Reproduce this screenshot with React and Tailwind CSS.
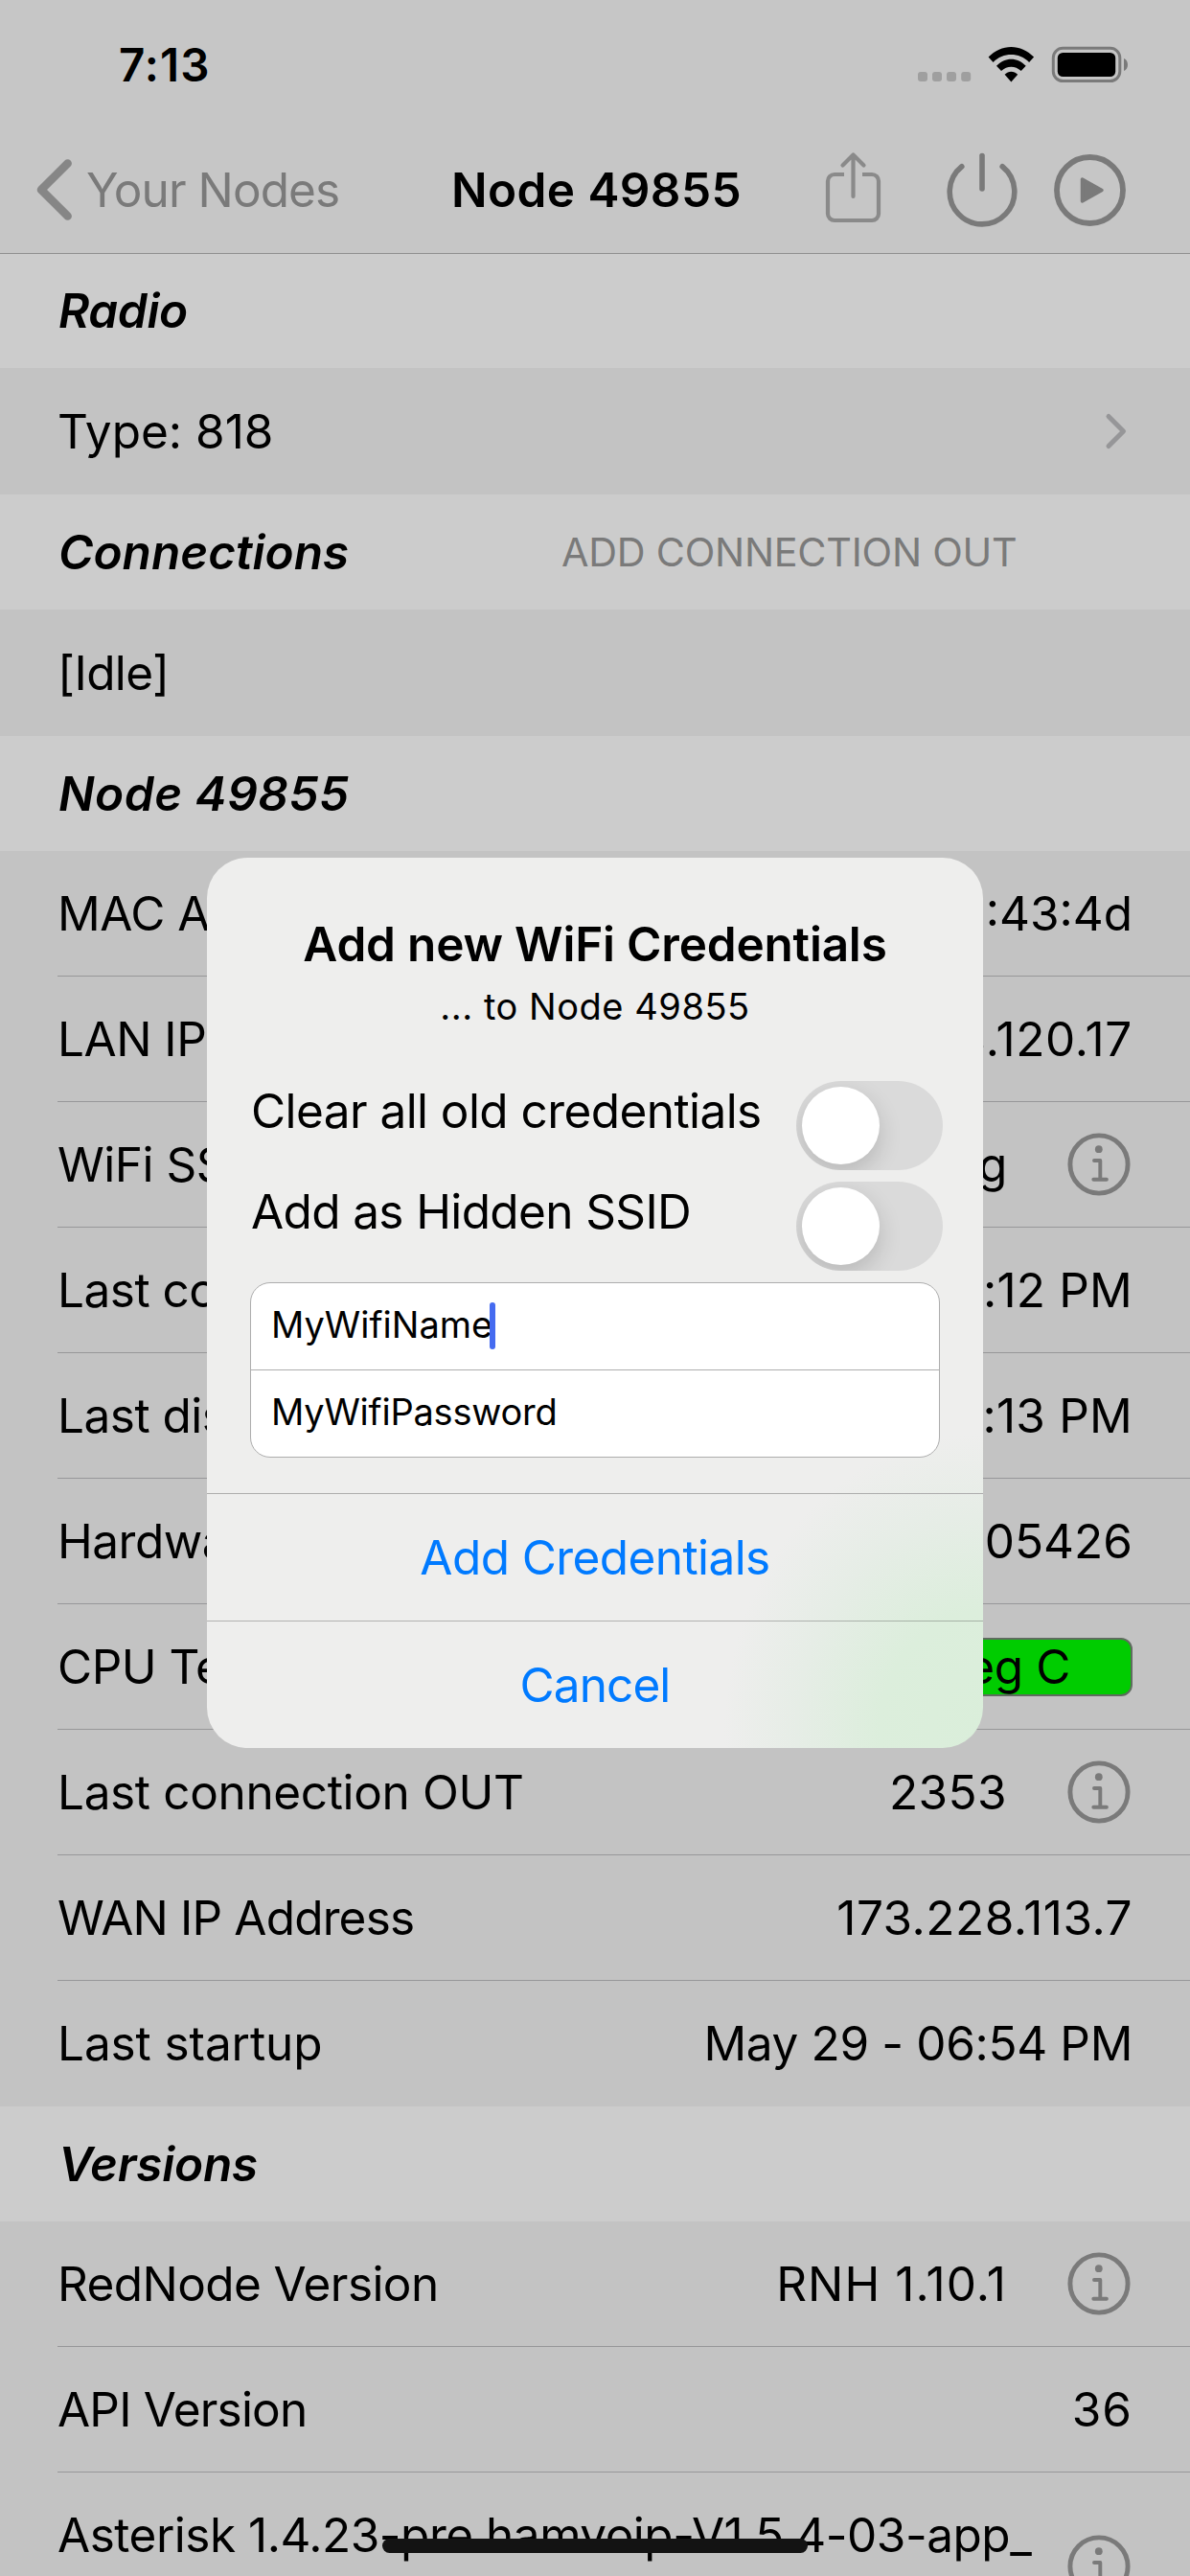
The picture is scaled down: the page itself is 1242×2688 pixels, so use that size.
import React from 'react'

const nodeRows = [
  { label: 'MAC Address', value: 'b8:27:eb:80:43:4d', valueClass: 'tracking-normal' },
  { label: 'LAN IP Address', value: '192.168.120.17', valueClass: 'tracking-[0.7px]' },
  { label: 'WiFi SSID', value: 'HamLoung', info: true, valueClass: 'tracking-[-0.3px]' },
  { label: 'Last connected', value: 'May 29 - 07:12 PM', valueClass: 'tracking-[0.2px]' },
  { label: 'Last disconnect', value: 'May 29 - 07:13 PM', valueClass: 'tracking-[0.2px]' },
  { label: 'Hardware', value: '0000000005426' },
  { label: 'CPU Temperature', badge: '55 Deg C' },
  { label: 'Last connection OUT', value: '2353', info: true, labelClass: 'tracking-[-0.35px]', valueClass: 'tracking-[0.4px]' },
  { label: 'WAN IP Address', value: '173.228.113.7', labelClass: 'tracking-[-0.83px]', valueClass: 'tracking-[0.5px]' },
  { label: 'Last startup', value: 'May 29 - 06:54 PM', labelClass: 'tracking-[-0.1px]', valueClass: 'tracking-[-0.35px]' },
]

const versionRows = [
  { label: 'RedNode Version', value: 'RNH 1.10.1', info: true, labelClass: 'tracking-[-0.6px]', valueClass: 'tracking-[1.06px]' },
  { label: 'API Version', value: '36', labelClass: 'tracking-[-0.79px]', valueClass: 'tracking-[1px]' },
]

const InfoIcon = () => (
  <svg className="h-[66px] w-[66px] shrink-0" viewBox="0 0 66 66" fill="none" stroke="#7a7a7a" strokeLinecap="round" strokeLinejoin="round">
    <circle cx="33" cy="33" r="30.1" strokeWidth="4.9" />
    <circle cx="32.8" cy="17.2" r="3.9" fill="#7a7a7a" stroke="none" />
    <path d="M28 29h6.3v19.8M27.3 48.8h13.6" strokeWidth="3.9" />
  </svg>
)

const StatusBar = () => (
  <div className="flex h-[132px] items-start justify-between pl-[124px] pr-[64px] pt-[38px]">
    <span className="text-[47.5px] leading-[60px] font-semibold tracking-[1.07px]">7:13</span>
    <svg className="mt-[7px] h-[48px] w-[222px]" viewBox="0 0 222 48">
      <g fill="#9f9f9f">
        <rect x="2" y="30" width="10" height="10" rx="3" />
        <rect x="17" y="30" width="10" height="10" rx="3" />
        <rect x="32" y="30" width="10" height="10" rx="3" />
        <rect x="47.2" y="30" width="10" height="10" rx="3" />
      </g>
      <path d="M75.6 14.6c13.4-14.2 34.1-14.2 47.5 0l-5 5.3c-10.4-10.6-27.1-10.6-37.5 0z" />
      <path d="M84 23.8c8.8-9.4 22-9.4 30.7 0l-5 5.2c-6-5.8-14.6-5.8-20.7 0z" />
      <path d="M92.6 32.8c4-4 9.6-4 13.6 0l-6.8 7.6z" />
      <rect x="143.3" y="5.3" width="69.5" height="34.2" rx="10" fill="none" stroke="#7a7a7a" strokeWidth="3" />
      <rect x="147.8" y="10" width="60.4" height="25" rx="5.5" />
      <path d="M217 16c5.3 2 5.3 11 0 13z" fill="#7a7a7a" />
    </svg>
  </div>
)

const NavBar = () => (
  <div className="flex h-[132px] items-center pl-[36px] pr-[66px]">
    <svg className="h-[68px] w-[42px]" viewBox="0 0 42 68" fill="none" stroke="#868686" strokeWidth="8.6" strokeLinecap="round" strokeLinejoin="round">
      <path d="M34.6 6.5L7 34L34.6 61.5" />
    </svg>
    <span className="ml-[12px] w-[381px] text-[49.5px] tracking-[-0.94px] text-[#7a7a7a]">Your Nodes</span>
    <h1 className="flex-1 text-[49.5px] font-semibold tracking-[0.41px]">Node 49855</h1>
    <svg className="h-[82px] w-[64px]" viewBox="0 0 64 82" fill="none" stroke="#8a8a8a" strokeWidth="4.2" strokeLinecap="round" strokeLinejoin="round">
      <path d="M23 25H13a7 7 0 0 0-7 7V66a7 7 0 0 0 7 7h39a7 7 0 0 0 7-7V32a7 7 0 0 0-7-7h-10" strokeLinecap="butt" />
      <path d="M32.5 48V5M21.5 15.5L32.5 4.5L43.5 15.5" />
    </svg>
    <svg className="ml-[64px] h-[82px] w-[78px]" viewBox="0 0 78 82" fill="none" stroke="#7a7a7a" strokeWidth="5.6" strokeLinecap="round">
      <path d="M17.8 16.8a33.8 33.8 0 1 0 42.4 0" />
      <path d="M39 5.5V40" />
    </svg>
    <svg className="ml-[34px] h-[82px] w-[78px]" viewBox="0 0 78 82">
      <circle cx="39.5" cy="41.5" r="34.5" fill="none" stroke="#7a7a7a" strokeWidth="5.8" />
      <path d="M31.5 30v23L52 41.5z" fill="#7a7a7a" stroke="#7a7a7a" strokeWidth="3.5" strokeLinejoin="round" />
    </svg>
  </div>
)

const SectionHeader = ({ title, titleClass = '', action }) => (
  <div className="flex h-[120px] items-center bg-[#cccccc] pl-[61px]">
    <h2 className={`w-[525px] text-[49.5px] font-semibold italic ${titleClass}`}>{title}</h2>
    {action && <span className="text-[41.3px] tracking-[-0.24px] text-[#7a7a7a]">{action}</span>}
  </div>
)

const PlainRow = ({ children, className = '' }) => (
  <div className={`flex h-[132px] items-center justify-between bg-[#c3c3c3] pl-[60px] pr-[64px] ${className}`}>{children}</div>
)

const Row = ({ row, last }) => (
  <div className="h-[131px] bg-[#c3c3c3] pl-[60px]">
    <div className={`flex h-[131px] items-center border-b pr-[60px] ${last ? 'border-transparent' : 'border-[#979799]'}`}>
      <span className={`flex-1 whitespace-nowrap ${row.labelClass || 'tracking-[-0.5px]'}`}>{row.label}</span>
      {row.badge && (
        <span className="flex h-[61px] w-[332px] items-center justify-end rounded-[12px] border-2 border-[#5f6b5f] bg-[#00cc00] pr-[63px] tracking-[-0.4px] whitespace-nowrap">
          {row.badge}
        </span>
      )}
      {row.value && <span className={`whitespace-nowrap ${row.valueClass || ''}`}>{row.value}</span>}
      {row.info && (
        <span className="ml-[63px] mr-[2px]">
          <InfoIcon />
        </span>
      )}
    </div>
  </div>
)

const Toggle = () => (
  <span className="flex h-[93px] w-[153px] shrink-0 items-center overflow-hidden rounded-full bg-[#dadada] pl-[6px]">
    <span className="h-[81px] w-[81px] rounded-full bg-white shadow-[0_9px_24px_rgba(0,0,0,0.16)]" />
  </span>
)

const CredentialsDialog = () => (
  <div className="absolute top-[895px] left-[216px] flex h-[929px] w-[810px] flex-col overflow-hidden rounded-[42px] bg-[#eeeeed] bg-[radial-gradient(ellipse_270px_310px_at_100%_98%,#daeeda_0%,#dceedc_40%,#e6ede6_72%,#eeeeed_100%)]">
    <div className="flex h-[664px] flex-col border-b border-[#adadad] px-[45px]">
      <h2 className="mt-[59px] text-center text-[49.5px] leading-[62px] font-semibold tracking-[-0.2px]">Add new WiFi Credentials</h2>
      <p className="mt-[7px] text-center text-[38px] leading-[54px] tracking-[0.53px]">... to Node 49855</p>
      <div className="mt-[51px] -mr-[3px] flex h-[93px] justify-between">
        <span className="-mt-px ml-px leading-[64px] tracking-[-0.57px] whitespace-nowrap">Clear all old credentials</span>
        <Toggle />
      </div>
      <div className="mt-[12px] -mr-[3px] flex h-[93px] justify-between">
        <span className="-mt-px ml-px leading-[64px] tracking-[-0.63px] whitespace-nowrap">Add as Hidden SSID</span>
        <Toggle />
      </div>
      <div className="mt-[12px] h-[183px] rounded-[21px] border border-[#adadad] bg-white text-[38px]">
        <div className="flex h-[91px] items-center border-b border-[#adadad] pb-[2px] pl-[21px]">
          <span className="-mt-[3px]">MyWifiName</span>
          <span className="-ml-[3px] h-[49px] w-[6px] rounded-full bg-[#456bf0]" />
        </div>
        <div className="flex h-[90px] items-center pb-[5px] pl-[21px] tracking-[-0.23px]">MyWifiPassword</div>
      </div>
    </div>
    <button className="h-[133px] border-b border-black/25 tracking-[-0.58px] text-[#007aff]">Add Credentials</button>
    <button className="h-[132px] tracking-[-0.9px] text-[#007aff]">Cancel</button>
  </div>
)

export default function App() {
  return (
    <div className="relative h-[2688px] w-[1242px] overflow-hidden bg-[#c3c3c3] font-['Inter',sans-serif] text-[49.5px] leading-[62px] text-black">
      {/* header overlaps the first section by its hairline */}
      <header className="relative -mb-px h-[265px] border-b border-[#8f8f8f] bg-[#c6c6c6]">
        <StatusBar />
        <NavBar />
      </header>
      <SectionHeader title="Radio" titleClass="tracking-[-0.37px]" />
      <PlainRow>
        <span>Type: 818</span>
        <svg className="h-[40px] w-[26px]" viewBox="0 0 26 40" fill="none" stroke="#969698" strokeWidth="5" strokeLinecap="round" strokeLinejoin="round">
          <path d="M5 4.5L20.5 20L5 35.5" />
        </svg>
      </PlainRow>
      <SectionHeader title="Connections" action="ADD CONNECTION OUT" />
      <PlainRow className="tracking-[-0.6px]">[Idle]</PlainRow>
      <SectionHeader title="Node 49855" titleClass="tracking-[0.51px]" />
      {nodeRows.map((row, i) => (
        <Row key={row.label} row={row} last={i === nodeRows.length - 1} />
      ))}
      <SectionHeader title="Versions" titleClass="tracking-[-0.2px]" />
      {versionRows.map((row) => (
        <Row key={row.label} row={row} />
      ))}
      <div className="flex justify-between bg-[#c3c3c3] pt-[34px] pl-[60px] pr-[62px]">
        <span className="w-[1030px] tracking-[-0.49px]">Asterisk 1.4.23-pre hamvoip-V1.5.4-03-app_</span>
        <span className="mt-[31px]">
          <InfoIcon />
        </span>
      </div>
      <CredentialsDialog />
      <div className="absolute top-[2649px] left-[399px] h-[15px] w-[444px] rounded-full bg-[#131313]" />
    </div>
  )
}
